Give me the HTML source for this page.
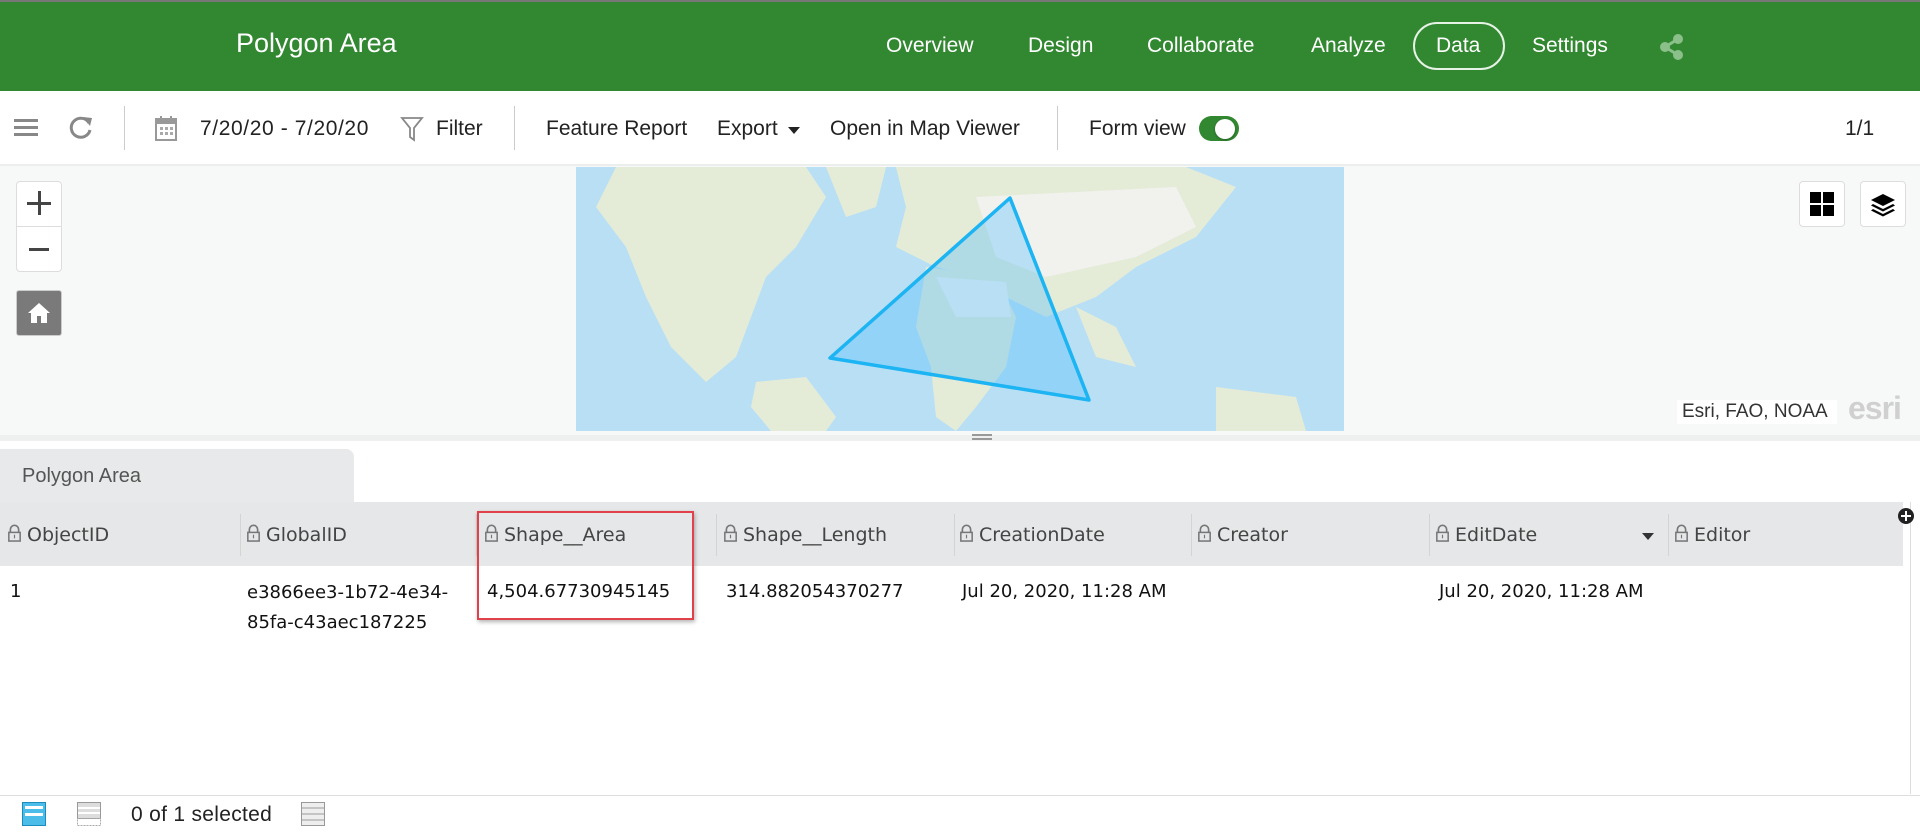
<!DOCTYPE html>
<html><head><meta charset="utf-8"><style>
*{box-sizing:border-box;margin:0;padding:0}
body{width:1920px;height:840px;overflow:hidden;background:#fff;font-family:"Liberation Sans",sans-serif;position:relative;color:#222}
.abs{position:absolute}
#hdr{left:0;top:0;width:1920px;height:91px;background:#328731;border-top:2px solid #777}
.nav{position:absolute;top:32px;color:#fff;font-size:21px}
#tb{left:0;top:91px;width:1920px;height:73px;background:#fff}
.tt{position:absolute;top:117px;font-size:21px;color:#222}
.vd{position:absolute;top:106px;width:1px;height:44px;background:#ccc}
#map{left:0;top:164px;width:1920px;height:271px;background:#f7f9f8;border-top:2px solid #eceeed}
.btn{position:absolute;background:#fff;border:1px solid #ddd;border-radius:4px}
.hc{position:absolute;top:502px;height:64px;background:#e6e7e8}
.col{position:absolute;top:524px;font-family:"DejaVu Sans",sans-serif;font-size:19px;color:#444}
.sep{position:absolute;top:514px;width:1px;height:42px;background:#d4d4d4}
.cell{position:absolute;font-family:"DejaVu Sans",sans-serif;font-size:18px;color:#111}
.lock{display:inline-block;width:13px;height:18px;margin-right:6px;vertical-align:-1px}
</style></head><body>
<div id="hdr" class="abs">
 <div class="abs" style="left:236px;top:26px;color:#fff;font-size:27px">Polygon Area</div>
 <div class="nav" style="left:886px">Overview</div>
 <div class="nav" style="left:1028px">Design</div>
 <div class="nav" style="left:1147px">Collaborate</div>
 <div class="nav" style="left:1311px">Analyze</div>
 <div class="abs" style="left:1413px;top:20px;width:92px;height:48px;border:2px solid #e6f2e6;border-radius:24px"></div>
 <div class="nav" style="left:1436px">Data</div>
 <div class="nav" style="left:1532px">Settings</div>
 <svg class="abs" style="left:1659px;top:32px" width="26" height="26" viewBox="0 0 26 26"><g fill="#8cc08a" stroke="#8cc08a" stroke-width="3"><line x1="6" y1="13" x2="19" y2="5"/><line x1="6" y1="13" x2="19" y2="21"/><circle cx="6" cy="13" r="3.5"/><circle cx="19" cy="5" r="3.5"/><circle cx="19" cy="21" r="3.5"/></g></svg>
</div>
<div id="tb" class="abs"></div>
<svg class="abs" style="left:14px;top:119px" width="24" height="18"><g fill="#888"><rect y="0" width="24" height="3"/><rect y="7" width="24" height="3"/><rect y="14" width="24" height="3"/></g></svg>
<svg class="abs" style="left:68px;top:115px" width="26" height="26" viewBox="0 0 26 26"><path d="M21 8 A9.5 9.5 0 1 0 22 15" fill="none" stroke="#888" stroke-width="3"/><path d="M15 2 L24 3 L22 11 Z" fill="#888"/></svg>
<div class="vd" style="left:124px"></div>
<svg class="abs" style="left:155px;top:115px" width="22" height="26"><rect x="1" y="4" width="20" height="21" fill="none" stroke="#999" stroke-width="2"/><rect x="1" y="4" width="20" height="5" fill="#999"/><rect x="5" y="1" width="2" height="5" fill="#999"/><rect x="15" y="1" width="2" height="5" fill="#999"/><g fill="#aaa"><rect x="5" y="12" width="3" height="3"/><rect x="10" y="12" width="3" height="3"/><rect x="15" y="12" width="3" height="3"/><rect x="5" y="17" width="3" height="3"/><rect x="10" y="17" width="3" height="3"/><rect x="15" y="17" width="3" height="3"/></g></svg>
<div class="tt" style="left:200px;letter-spacing:0.6px">7/20/20 - 7/20/20</div>
<svg class="abs" style="left:400px;top:116px" width="24" height="26"><path d="M2 2 H22 L14 12 V24 L10 21 V12 Z" fill="none" stroke="#888" stroke-width="1.8"/></svg>
<div class="tt" style="left:436px">Filter</div>
<div class="vd" style="left:514px"></div>
<div class="tt" style="left:546px">Feature Report</div>
<div class="tt" style="left:717px">Export</div>
<svg class="abs" style="left:788px;top:127px" width="12" height="8"><path d="M0 0 H12 L6 7 Z" fill="#222"/></svg>
<div class="tt" style="left:830px">Open in Map Viewer</div>
<div class="vd" style="left:1057px"></div>
<div class="tt" style="left:1089px">Form view</div>
<div class="abs" style="left:1199px;top:116px;width:40px;height:25px;border-radius:13px;background:#328731"></div>
<div class="abs" style="left:1215px;top:119px;width:20px;height:20px;border-radius:50%;background:#fff;box-shadow:0 1px 2px rgba(0,0,0,.3)"></div>
<div class="tt" style="left:1845px">1/1</div>

<div id="map" class="abs"></div>
<svg class="abs" style="left:576px;top:167px" width="768" height="264" viewBox="0 0 768 264">
 <rect width="768" height="264" fill="#b9dff5"/>
 <g fill="#e4ecd8">
  <path d="M40 0 L230 0 L250 30 L220 80 L190 110 L175 150 L160 190 L130 215 L95 180 L70 130 L50 80 L20 40 Z"/>
  <path d="M180 215 L230 210 L260 250 L250 264 L195 264 L175 240 Z"/>
  <path d="M320 0 L610 0 L660 20 L620 70 L560 100 L520 130 L470 150 L430 130 L400 110 L360 100 L320 80 L330 40 Z"/>
  <path d="M350 100 L420 110 L440 150 L430 200 L400 240 L380 264 L360 250 L355 200 L340 160 Z"/>
  <path d="M640 220 L720 230 L730 264 L640 264 Z"/>
  <path d="M250 0 L310 0 L300 40 L270 50 Z"/>
  <path d="M500 140 L540 160 L560 200 L520 190 Z"/>
 </g>
 <g fill="#f1f1ee"><path d="M400 30 L600 20 L620 60 L560 90 L470 110 L420 90 Z"/><path d="M360 110 L430 115 L435 150 L380 150 Z"/></g>
 <path d="M434 31 L254 191 L513 233 Z" fill="rgba(80,190,255,0.35)" stroke="#1cb4f2" stroke-width="3.5" stroke-linejoin="round"/>
</svg>
<div class="btn" style="left:16px;top:181px;width:46px;height:91px"></div>
<div class="abs" style="left:16px;top:226px;width:46px;height:1px;background:#ddd"></div>
<div class="abs" style="left:27px;top:202px;width:24px;height:3px;background:#444"></div>
<div class="abs" style="left:38px;top:191px;width:3px;height:24px;background:#444"></div>
<div class="abs" style="left:29px;top:248px;width:20px;height:3px;background:#444"></div>
<div class="abs" style="left:16px;top:290px;width:46px;height:46px;background:#7a7a7a;border-radius:3px;border:1px solid #ccc"></div>
<svg class="abs" style="left:27px;top:301px" width="24" height="24"><path d="M12 2 L23 12 H20 V22 H14 V15 H10 V22 H4 V12 H1 Z" fill="#fff"/></svg>
<div class="btn" style="left:1799px;top:181px;width:46px;height:46px"></div>
<svg class="abs" style="left:1810px;top:192px" width="24" height="24"><g fill="#000"><rect width="11" height="11"/><rect x="13" width="11" height="11"/><rect y="13" width="11" height="11"/><rect x="13" y="13" width="11" height="11"/></g></svg>
<div class="btn" style="left:1860px;top:181px;width:46px;height:46px"></div>
<svg class="abs" style="left:1870px;top:192px" width="26" height="26"><path d="M13 2 L25 8 L13 14 L1 8 Z" fill="#000"/><path d="M3 12 L13 17 L23 12 L25 13.5 L13 19.5 L1 13.5 Z M3 17 L13 22 L23 17 L25 18.5 L13 24.5 L1 18.5 Z" fill="#000"/></svg>
<div class="abs" style="left:1677px;top:400px;width:160px;height:24px;background:#fff"></div>
<div class="abs" style="left:1682px;top:401px;font-size:19px;color:#333">Esri, FAO, NOAA</div>
<div class="abs" style="left:1848px;top:390px;font-size:32px;font-weight:bold;color:#d0d0d0;letter-spacing:-1px">esri</div>
<div class="abs" style="left:0;top:435px;width:1920px;height:6px;background:#eef0ef"></div>
<svg class="abs" style="left:972px;top:433px" width="20" height="8"><rect y="1" width="20" height="2" fill="#999"/><rect y="5" width="20" height="2" fill="#999"/></svg>

<div class="abs" style="left:0;top:449px;width:354px;height:53px;background:#e8e9ea;border-top-right-radius:8px"></div>
<div class="abs" style="left:22px;top:465px;font-size:20px;color:#555">Polygon Area</div>
<div class="hc" style="left:0;width:1903px"></div>
<div class="abs" style="left:1910px;top:502px;width:1px;height:292px;background:#ddd"></div>
<svg width="0" height="0" style="position:absolute"><defs><symbol id="lk" viewBox="0 0 11 15"><path d="M2 7 V4.5 A3.5 3.5 0 0 1 9 4.5 V7" fill="none" stroke="#777" stroke-width="1.4"/><rect x="0.7" y="7" width="9.6" height="7.3" fill="none" stroke="#777" stroke-width="1.3"/><rect x="5" y="9" width="1" height="3" fill="#777"/></symbol></defs></svg>
<div class="col" style="left:8px"><svg class="lock"><use href="#lk"/></svg>ObjectID</div>
<div class="sep" style="left:240px"></div>
<div class="col" style="left:247px"><svg class="lock"><use href="#lk"/></svg>GlobalID</div>
<div class="sep" style="left:476px"></div>
<div class="col" style="left:485px"><svg class="lock"><use href="#lk"/></svg>Shape__Area</div>
<div class="sep" style="left:716px"></div>
<div class="col" style="left:724px"><svg class="lock"><use href="#lk"/></svg>Shape__Length</div>
<div class="sep" style="left:954px"></div>
<div class="col" style="left:960px"><svg class="lock"><use href="#lk"/></svg>CreationDate</div>
<div class="sep" style="left:1191px"></div>
<div class="col" style="left:1198px"><svg class="lock"><use href="#lk"/></svg>Creator</div>
<div class="sep" style="left:1429px"></div>
<div class="col" style="left:1436px"><svg class="lock"><use href="#lk"/></svg>EditDate</div>
<svg class="abs" style="left:1642px;top:533px" width="12" height="8"><path d="M0 0 H12 L6 7 Z" fill="#333"/></svg>
<div class="sep" style="left:1668px"></div>
<div class="col" style="left:1675px"><svg class="lock"><use href="#lk"/></svg>Editor</div>
<div class="abs" style="left:1898px;top:508px;width:16px;height:16px;border-radius:50%;background:#222"></div>
<div class="abs" style="left:1901px;top:515px;width:10px;height:2px;background:#fff"></div>
<div class="abs" style="left:1905px;top:511px;width:2px;height:10px;background:#fff"></div>

<div class="cell" style="left:10px;top:581px">1</div>
<div class="cell" style="left:247px;top:578px;line-height:30px">e3866ee3-1b72-4e34-<br>85fa-c43aec187225</div>
<div class="cell" style="left:487px;top:581px">4,504.67730945145</div>
<div class="cell" style="left:726px;top:581px">314.882054370277</div>
<div class="cell" style="left:962px;top:581px">Jul 20, 2020, 11:28 AM</div>
<div class="cell" style="left:1439px;top:581px">Jul 20, 2020, 11:28 AM</div>
<div class="abs" style="left:477px;top:511px;width:217px;height:109px;border:2px solid #e0414a;box-shadow:1px 2px 4px rgba(0,0,0,.3)"></div>

<div class="abs" style="left:0;top:795px;width:1920px;height:1px;background:#ddd"></div>
<svg class="abs" style="left:22px;top:802px" width="24" height="24"><rect x="0.5" y="0.5" width="23" height="23" fill="#4cbde8" stroke="#1b8cbf"/><rect x="3" y="4" width="18" height="3" fill="#fff"/><rect x="3" y="11" width="18" height="3" fill="#fff"/></svg>
<svg class="abs" style="left:77px;top:802px" width="24" height="24"><rect x="0.5" y="0.5" width="23" height="16" fill="#ddd" stroke="#999"/><line x1="1" y1="6" x2="23" y2="6" stroke="#fff" stroke-width="2"/><line x1="1" y1="11" x2="23" y2="11" stroke="#fff" stroke-width="2"/><rect x="0.5" y="16.5" width="23" height="7" fill="none" stroke="#aaa" stroke-dasharray="2 1"/></svg>
<div class="abs" style="left:131px;top:803px;font-size:21px;color:#222;letter-spacing:0.3px">0 of 1 selected</div>
<svg class="abs" style="left:301px;top:802px" width="24" height="24"><rect x="0.5" y="0.5" width="23" height="23" fill="#eee" stroke="#999"/><g stroke="#999"><line x1="1" y1="6" x2="23" y2="6"/><line x1="1" y1="12" x2="23" y2="12"/><line x1="1" y1="18" x2="23" y2="18"/></g></svg>
</body></html>
